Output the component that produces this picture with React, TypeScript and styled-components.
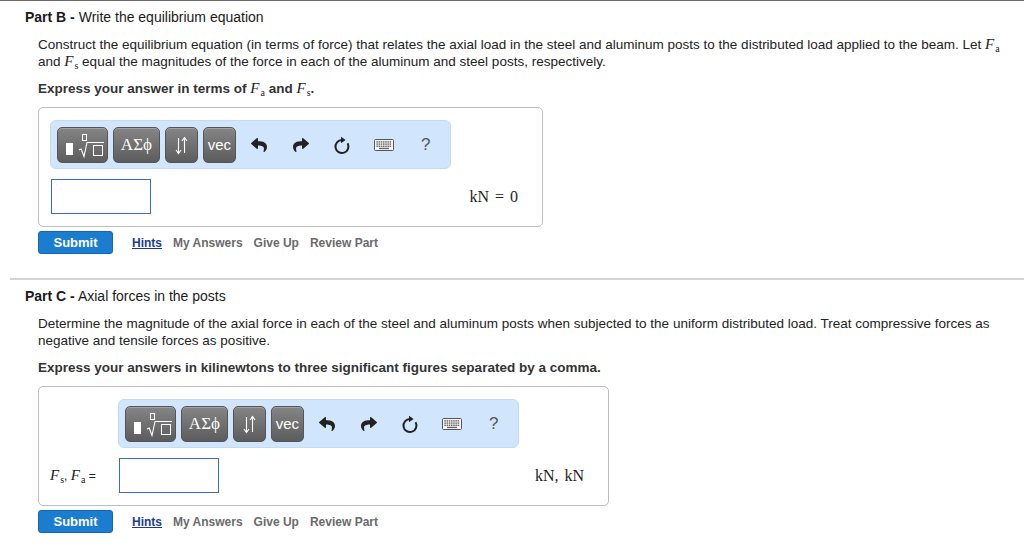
import styled, { createGlobalStyle } from "styled-components";
import { FaReply, FaShare } from "react-icons/fa";
import type { ReactNode } from "react";

const GlobalStyle = createGlobalStyle`
  html, body {
    margin: 0;
    padding: 0;
    background: #fff;
  }
  body {
    font-family: "Liberation Sans", Arial, Helvetica, sans-serif;
    font-size: 12px;
    color: #222;
  }
`

function Var({ name, sub }: { name: string, sub?: string }) {
  return (
    <MathVar>
      {name}
      {sub && <MathSub>{sub}</MathSub>}
    </MathVar>
  )
}

function TemplateIcon() {
  return (
    <svg width="49" height="34" viewBox="0 0 49 34">
      <rect x="8" y="15" width="7" height="12" fill="#fff" />
      <rect x="24.5" y="6.5" width="4" height="6" fill="none" stroke="#fff" />
      <path d="M21 22 L23.2 21 L26 28.5 L29 14.5 H46" fill="none" stroke="#fff" strokeWidth="1.1" />
      <rect x="35.5" y="17.5" width="9" height="10" fill="none" stroke="#fff" />
    </svg>
  )
}

function ArrowsIcon() {
  return (
    <svg width="31" height="34" viewBox="0 0 31 34">
      <path d="M12.5 10 V25 M10 22 L12.5 25.5 L15 22" fill="none" stroke="#fff" strokeWidth="1.1" />
      <path d="M18.5 25 V10 M16 13 L18.5 9.5 L21 13" fill="none" stroke="#fff" strokeWidth="1.1" />
    </svg>
  )
}

function RefreshIcon() {
  return (
    <svg width="18" height="20" viewBox="0 0 18 20">
      <path d="M9 5 A6.5 6.5 0 1 0 14.6 8.3" fill="none" stroke="#222" strokeWidth="2" />
      <path d="M8 1.8 L12.6 5 L8 8.2 Z" fill="#222" />
    </svg>
  )
}

function KeyboardIcon() {
  const keys: ReactNode[] = []
  for (let r = 0; r < 3; r++) {
    for (let c = 0; c < 7; c++) {
      keys.push(<rect key={`${r}-${c}`} x={2.4 + c * 2.2} y={2.2 + r * 2.2} width="1.5" height="1.4" fill="#666" />)
    }
  }
  return (
    <svg width="20" height="12" viewBox="0 0 20 12">
      <rect x="0.5" y="0.5" width="19" height="11" rx="1" fill="#f4f4f4" stroke="#555" />
      {keys}
      <rect x="5" y="8.8" width="10" height="1.3" fill="#666" />
    </svg>
  )
}

function MathToolbar({ indent = 0 }: { indent?: number }) {
  return (
    <Toolbar $indent={indent}>
      <ToolButton $w={51}><TemplateIcon /></ToolButton>
      <ToolButton $w={51} $serif>ΑΣϕ</ToolButton>
      <ToolButton $w={33}><ArrowsIcon /></ToolButton>
      <ToolButton $w={36}>vec</ToolButton>
      <IconSlot><FaReply size={16} /></IconSlot>
      <IconSlot><FaShare size={16} /></IconSlot>
      <IconSlot><RefreshIcon /></IconSlot>
      <IconSlot><KeyboardIcon /></IconSlot>
      <IconSlot><HelpMark>?</HelpMark></IconSlot>
    </Toolbar>
  )
}

function ActionBar() {
  return (
    <Actions>
      <SubmitButton>Submit</SubmitButton>
      <ActionLink $primary>Hints</ActionLink>
      <ActionLink>My Answers</ActionLink>
      <ActionLink>Give Up</ActionLink>
      <ActionLink>Review Part</ActionLink>
    </Actions>
  )
}

export default function App() {
  return (
    <Page>
      <GlobalStyle />

      <Part>
        <Heading><b>Part B -</b> Write the equilibrium equation</Heading>
        <PartBody>
          <Description>
            Construct the equilibrium equation (in terms of force) that relates the axial load in the steel and
            aluminum posts to the distributed load applied to the beam. Let <Var name="F" sub="a" /> and <Var name="F" sub="s" /> equal
            the magnitudes of the force in each of the aluminum and steel posts, respectively.
          </Description>
          <Instruction>
            Express your answer in terms of <Var name="F" sub="a" /> and <Var name="F" sub="s" />.
          </Instruction>

          <AnswerBox $width={505}>
            <MathToolbar />
            <InputRow>
              <AnswerInput $indent={1} />
              <Unit>kN = 0</Unit>
            </InputRow>
          </AnswerBox>
          <ActionBar />
        </PartBody>
      </Part>

      <Divider />

      <Part>
        <Heading><b>Part C -</b> Axial forces in the posts</Heading>
        <PartBody>
          <Description>
            Determine the magnitude of the axial force in each of the steel and aluminum posts when subjected to the
            uniform distributed load. Treat compressive forces as negative and tensile forces as positive.
          </Description>
          <Instruction>
            Express your answers in kilinewtons to three significant figures separated by a comma.
          </Instruction>

          <AnswerBox $width={571}>
            <MathToolbar indent={68} />
            <InputRow>
              <Label>
                <Var name="F" sub="s" />, <Var name="F" sub="a" /> =
              </Label>
              <AnswerInput />
              <Unit>kN, kN</Unit>
            </InputRow>
          </AnswerBox>
          <ActionBar />
        </PartBody>
      </Part>
    </Page>
  )
}

const Page = styled.div`
  border-top: 1px solid #6a6a6a;
  width: 1024px;
  min-height: 542px;
`

const Part = styled.section`
  padding: 8px 10px 0 25px;
`

const Heading = styled.h2`
  margin: 0;
  font-size: 14px;
  line-height: 16px;
  font-weight: normal;
  color: #1a1a1a;

  b {
    font-weight: bold;
  }
`

const PartBody = styled.div`
  padding-left: 13px;
`

const Description = styled.p`
  margin: 11px 0 0;
  font-size: 13.5px;
  line-height: 17px;
  color: #222;
`

const Instruction = styled.p`
  margin: 10px 0 0;
  font-size: 13.5px;
  line-height: 17px;
  font-weight: bold;
  color: #333;
`

const MathVar = styled.span`
  font-family: "Liberation Serif", "Times New Roman", serif;
  font-style: italic;
  font-weight: normal;
  font-size: 15px;
  color: #222;
`

const MathSub = styled.sub`
  font-style: normal;
  font-size: 10px;
  vertical-align: -3px;
  line-height: 0;
  margin-left: 1px;
`

const AnswerBox = styled.div<{ $width: number }>`
  width: ${({ $width }) => $width}px;
  box-sizing: border-box;
  margin-top: 10px;
  padding: 12px 24px 12px 11px;
  border: 1px solid #bdbdbd;
  border-radius: 5px;
`

const Toolbar = styled.div<{ $indent: number }>`
  width: 401px;
  height: 49px;
  box-sizing: border-box;
  margin-left: ${({ $indent }) => $indent}px;
  padding: 0 6px;
  display: flex;
  align-items: center;
  gap: 5px;
  background: #d1e6fc;
  border: 1px solid #c4daf1;
  border-radius: 6px;
`

const ToolButton = styled.div<{ $w: number, $serif?: boolean }>`
  width: ${({ $w }) => $w}px;
  height: 36px;
  box-sizing: border-box;
  display: flex;
  align-items: center;
  justify-content: center;
  color: #fff;
  font-family: ${({ $serif }) => $serif
    ? '"Liberation Serif", "Times New Roman", serif'
    : '"Liberation Sans", Arial, sans-serif'};
  font-size: ${({ $serif }) => $serif ? '17px' : '15px'};
  background: linear-gradient(#858585, #5c5c5c);
  border: 1px solid #555;
  border-radius: 5px;
  box-shadow: inset 0 1px 0 rgba(255, 255, 255, 0.25);
`

const IconSlot = styled.div`
  width: 40px;
  height: 36px;
  display: flex;
  align-items: center;
  justify-content: center;
  color: #222;

  &:first-of-type {
    margin-left: -1px;
  }
`

const HelpMark = styled.span`
  font-family: "Liberation Sans", Arial, sans-serif;
  font-size: 17px;
  color: #555;
`

const InputRow = styled.div`
  display: flex;
  align-items: center;
  margin-top: 10px;
`

const Label = styled.div`
  width: 69px;
  font-size: 12px;
`

const AnswerInput = styled.div<{ $indent?: number }>`
  width: 100px;
  height: 35px;
  box-sizing: border-box;
  margin-left: ${({ $indent }) => $indent ?? 0}px;
  border: 1px solid #3a6bc9;
  background: #fff;
`

const Unit = styled.div`
  margin-left: auto;
  font-family: "Liberation Serif", "Times New Roman", serif;
  font-size: 16px;
  word-spacing: 2px;
  color: #222;
`

const Actions = styled.div`
  display: flex;
  align-items: center;
  gap: 11px;
  margin-top: 4px;
`

const SubmitButton = styled.button`
  width: 75px;
  height: 23px;
  margin-right: 8px;
  padding: 0;
  font-family: "Liberation Sans", Arial, sans-serif;
  font-size: 13px;
  font-weight: bold;
  color: #fff;
  background: #1a7dd0;
  border: 1px solid #1468b2;
  border-radius: 3px;
`

const ActionLink = styled.span<{ $primary?: boolean }>`
  font-size: 12px;
  font-weight: bold;
  color: ${({ $primary }) => $primary ? '#1d3c91' : '#6a6a6a'};
  text-decoration: ${({ $primary }) => $primary ? 'underline' : 'none'};
`

const Divider = styled.hr`
  margin: 24px 0 0 10px;
  height: 2px;
  border: none;
  background: #d4d4d4;
`
